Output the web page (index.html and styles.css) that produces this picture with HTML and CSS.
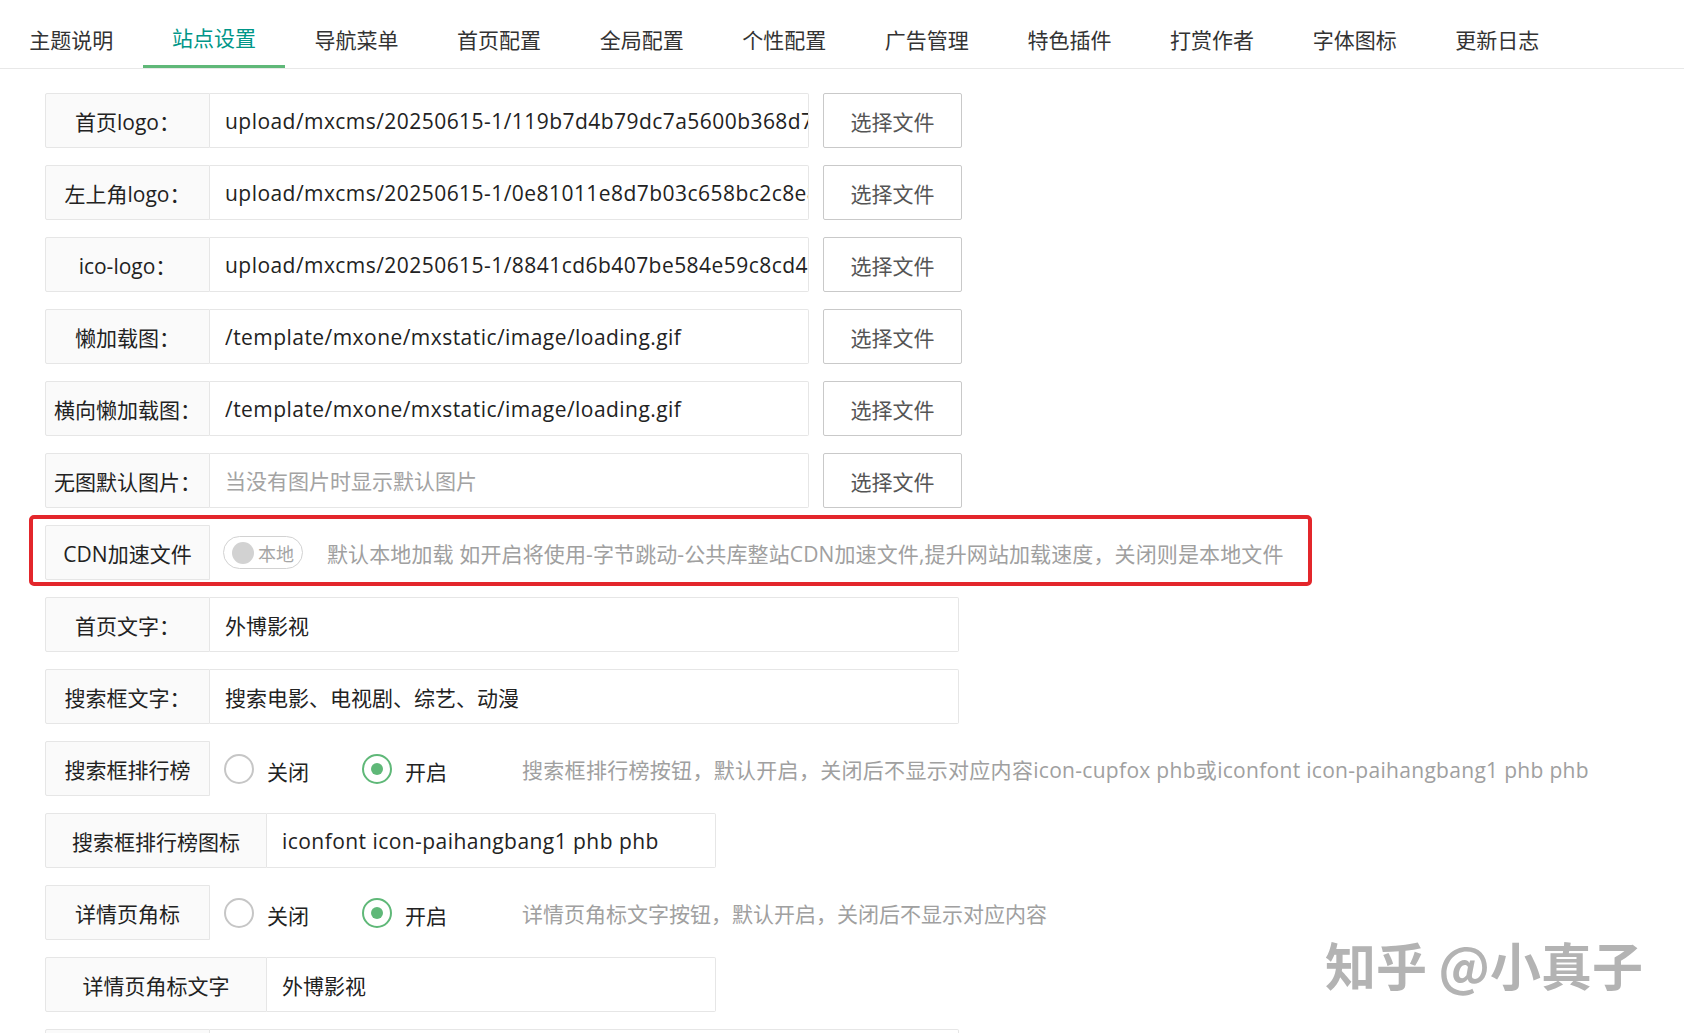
FILE: index.html
```html
<!DOCTYPE html>
<html lang="zh-CN">
<head>
<meta charset="utf-8">
<title>站点设置</title>
<link rel="stylesheet" href="styles.css">
</head>
<body>
<div class="tabs">
  <ul class="tab-title">
    <li>主题说明</li>
    <li class="active">站点设置</li>
    <li>导航菜单</li>
    <li>首页配置</li>
    <li>全局配置</li>
    <li>个性配置</li>
    <li>广告管理</li>
    <li>特色插件</li>
    <li>打赏作者</li>
    <li>字体图标</li>
    <li>更新日志</li>
  </ul>
</div>
<form class="form">
  <div class="item">
    <label class="lbl">首页logo：</label>
    <input class="inp latin" type="text" value="upload/mxcms/20250615-1/119b7d4b79dc7a5600b368d7f2a1.png">
    <button class="btn" type="button">选择文件</button>
  </div>
  <div class="item">
    <label class="lbl">左上角logo：</label>
    <input class="inp latin" type="text" value="upload/mxcms/20250615-1/0e81011e8d7b03c658bc2c8e84d1.png">
    <button class="btn" type="button">选择文件</button>
  </div>
  <div class="item">
    <label class="lbl">ico-logo：</label>
    <input class="inp latin" type="text" value="upload/mxcms/20250615-1/8841cd6b407be584e59c8cd47b3e.png">
    <button class="btn" type="button">选择文件</button>
  </div>
  <div class="item">
    <label class="lbl">懒加载图：</label>
    <input class="inp latin" type="text" value="/template/mxone/mxstatic/image/loading.gif">
    <button class="btn" type="button">选择文件</button>
  </div>
  <div class="item">
    <label class="lbl">横向懒加载图：</label>
    <input class="inp latin" type="text" value="/template/mxone/mxstatic/image/loading.gif">
    <button class="btn" type="button">选择文件</button>
  </div>
  <div class="item">
    <label class="lbl">无图默认图片：</label>
    <input class="inp" type="text" placeholder="当没有图片时显示默认图片">
    <button class="btn" type="button">选择文件</button>
  </div>
  <div class="item highlight">
    <label class="lbl">CDN加速文件</label>
    <div class="switch"><span class="knob"></span><span class="switch-text">本地</span></div>
    <div class="aux aux-switch">默认本地加载 如开启将使用-字节跳动-公共库整站CDN加速文件,提升网站加载速度，关闭则是本地文件</div>
  </div>
  <div class="item">
    <label class="lbl">首页文字：</label>
    <input class="inp inp-wide" type="text" value="外博影视">
  </div>
  <div class="item">
    <label class="lbl">搜索框文字：</label>
    <input class="inp inp-wide" type="text" value="搜索电影、电视剧、综艺、动漫">
  </div>
  <div class="item">
    <label class="lbl">搜索框排行榜</label>
    <div class="radios">
      <span class="radio"><span class="circle"></span><span class="radio-text">关闭</span></span>
      <span class="radio checked"><span class="circle"></span><span class="radio-text">开启</span></span>
    </div>
    <div class="aux aux-radio aux-mixed">搜索框排行榜按钮，默认开启，关闭后不显示对应内容icon-cupfox phb或iconfont icon-paihangbang1 phb phb</div>
  </div>
  <div class="item">
    <label class="lbl lbl-wide">搜索框排行榜图标</label>
    <input class="inp inp-short latin" type="text" value="iconfont icon-paihangbang1 phb phb">
  </div>
  <div class="item">
    <label class="lbl">详情页角标</label>
    <div class="radios">
      <span class="radio"><span class="circle"></span><span class="radio-text">关闭</span></span>
      <span class="radio checked"><span class="circle"></span><span class="radio-text">开启</span></span>
    </div>
    <div class="aux aux-radio">详情页角标文字按钮，默认开启，关闭后不显示对应内容</div>
  </div>
  <div class="item">
    <label class="lbl lbl-wide">详情页角标文字</label>
    <input class="inp inp-short" type="text" value="外博影视">
  </div>
  <div class="item">
    <label class="lbl">&nbsp;</label>
    <input class="inp inp-wide" type="text" value="">
  </div>
</form>
<div class="watermark">知乎 @小真子</div>
</body>
</html>
```

FILE: styles.css
```css
html, body {
  margin: 0;
  padding: 0;
  height: 100%;
  overflow: hidden;
  background: #fff;
}

body {
  position: relative;
  font-family: "Open Sans", "Noto Sans CJK SC", sans-serif;
  font-size: 21px;
  color: #333;
}

.tabs {
  border-bottom: 1px solid #e8e8e8;
  height: 69px;
  box-sizing: border-box;
}

.tab-title {
  list-style: none;
  margin: 0;
  padding: 0;
  display: flex;
  height: 68px;
}

.tab-title li {
  margin-top: 10px;
  height: 58px;
  line-height: 58px;
  padding: 0 29.3px;
  color: #333;
  font-family: "Noto Sans CJK SC", sans-serif;
  white-space: nowrap;
  box-sizing: border-box;
}

.tab-title li.active {
  color: #009688;
  border-bottom: 3px solid #5fb878;
  line-height: 55px;
}

.form {
  padding: 24px 0 0 45px;
  margin: 0;
}

.item {
  position: relative;
  display: flex;
  align-items: center;
  height: 55px;
  margin-bottom: 17px;
}

.lbl {
  flex: none;
  width: 165px;
  height: 55px;
  box-sizing: border-box;
  border: 1px solid #e6e6e6;
  border-radius: 2px 0 0 2px;
  background: #fafafa;
  display: flex;
  align-items: center;
  justify-content: center;
  white-space: nowrap;
  color: #222;
  font-family: "Open Sans", "Noto Sans CJK SC", sans-serif;
}

.lbl-wide {
  width: 222px;
}

.inp {
  flex: none;
  width: 599px;
  height: 55px;
  box-sizing: border-box;
  border: 1px solid #e6e6e6;
  border-left: 0;
  border-radius: 0 2px 2px 0;
  padding: 0 0 0 15px;
  margin: 0;
  font: inherit;
  color: #222;
  background: #fff;
  outline: none;
}

.inp.latin {
  letter-spacing: 0.45px;
}

.inp::placeholder {
  color: #a3a3a3;
}

.inp-wide {
  width: 749px;
}

.inp-short {
  width: 449px;
}

.btn {
  flex: none;
  margin-left: 14px;
  width: 139px;
  height: 55px;
  box-sizing: border-box;
  border: 1px solid #c9c9c9;
  border-radius: 2px;
  background: #fff;
  color: #555;
  font: inherit;
  font-family: "Noto Sans CJK SC", sans-serif;
  padding: 0;
}

.switch {
  flex: none;
  margin-left: 13px;
  width: 80px;
  height: 33px;
  box-sizing: border-box;
  border: 1px solid #d2d2d2;
  border-radius: 17px;
  display: flex;
  align-items: center;
  padding-left: 8px;
  background: #fff;
}

.knob {
  width: 22px;
  height: 22px;
  border-radius: 50%;
  background: #d2d2d2;
  flex: none;
}

.switch-text {
  margin-left: 4px;
  font-size: 18px;
  color: #a5a5a5;
  font-family: "Noto Sans CJK SC", sans-serif;
}

.aux {
  color: #a0a0a0;
  white-space: nowrap;
  font-family: "Open Sans", "Noto Sans CJK SC", sans-serif;
}

.aux-switch {
  margin-left: 24px;
  letter-spacing: 0.12px;
}

.radios {
  display: flex;
  align-items: center;
  padding-left: 14px;
}

.radio {
  display: flex;
  align-items: center;
  margin-right: 53px;
}

.radio:last-child {
  margin-right: 0;
}

.circle {
  width: 30px;
  height: 30px;
  box-sizing: border-box;
  border: 2px solid #c6c6c6;
  border-radius: 50%;
  display: flex;
  align-items: center;
  justify-content: center;
  background: #fff;
}

.radio.checked .circle {
  border-color: #5fb878;
}

.radio.checked .circle::after {
  content: "";
  width: 12px;
  height: 12px;
  border-radius: 50%;
  background: #5fb878;
}

.radio-text {
  margin-left: 13px;
  margin-top: 4px;
  color: #222;
  font-family: "Noto Sans CJK SC", sans-serif;
}

.aux-radio {
  margin-left: 75px;
}

.aux-mixed {
  letter-spacing: 0.3px;
}

.highlight::after {
  content: "";
  position: absolute;
  left: -16px;
  top: -10px;
  width: 1283px;
  height: 71px;
  box-sizing: border-box;
  border: 4px solid #e3262b;
  border-radius: 5px;
  pointer-events: none;
}

.watermark {
  position: absolute;
  left: 1325px;
  top: 936px;
  font-family: "Noto Sans CJK SC", sans-serif;
  font-size: 51px;
  font-weight: 700;
  line-height: 1.1;
  color: #ababab;
  white-space: nowrap;
  opacity: 0.9;
}
```
